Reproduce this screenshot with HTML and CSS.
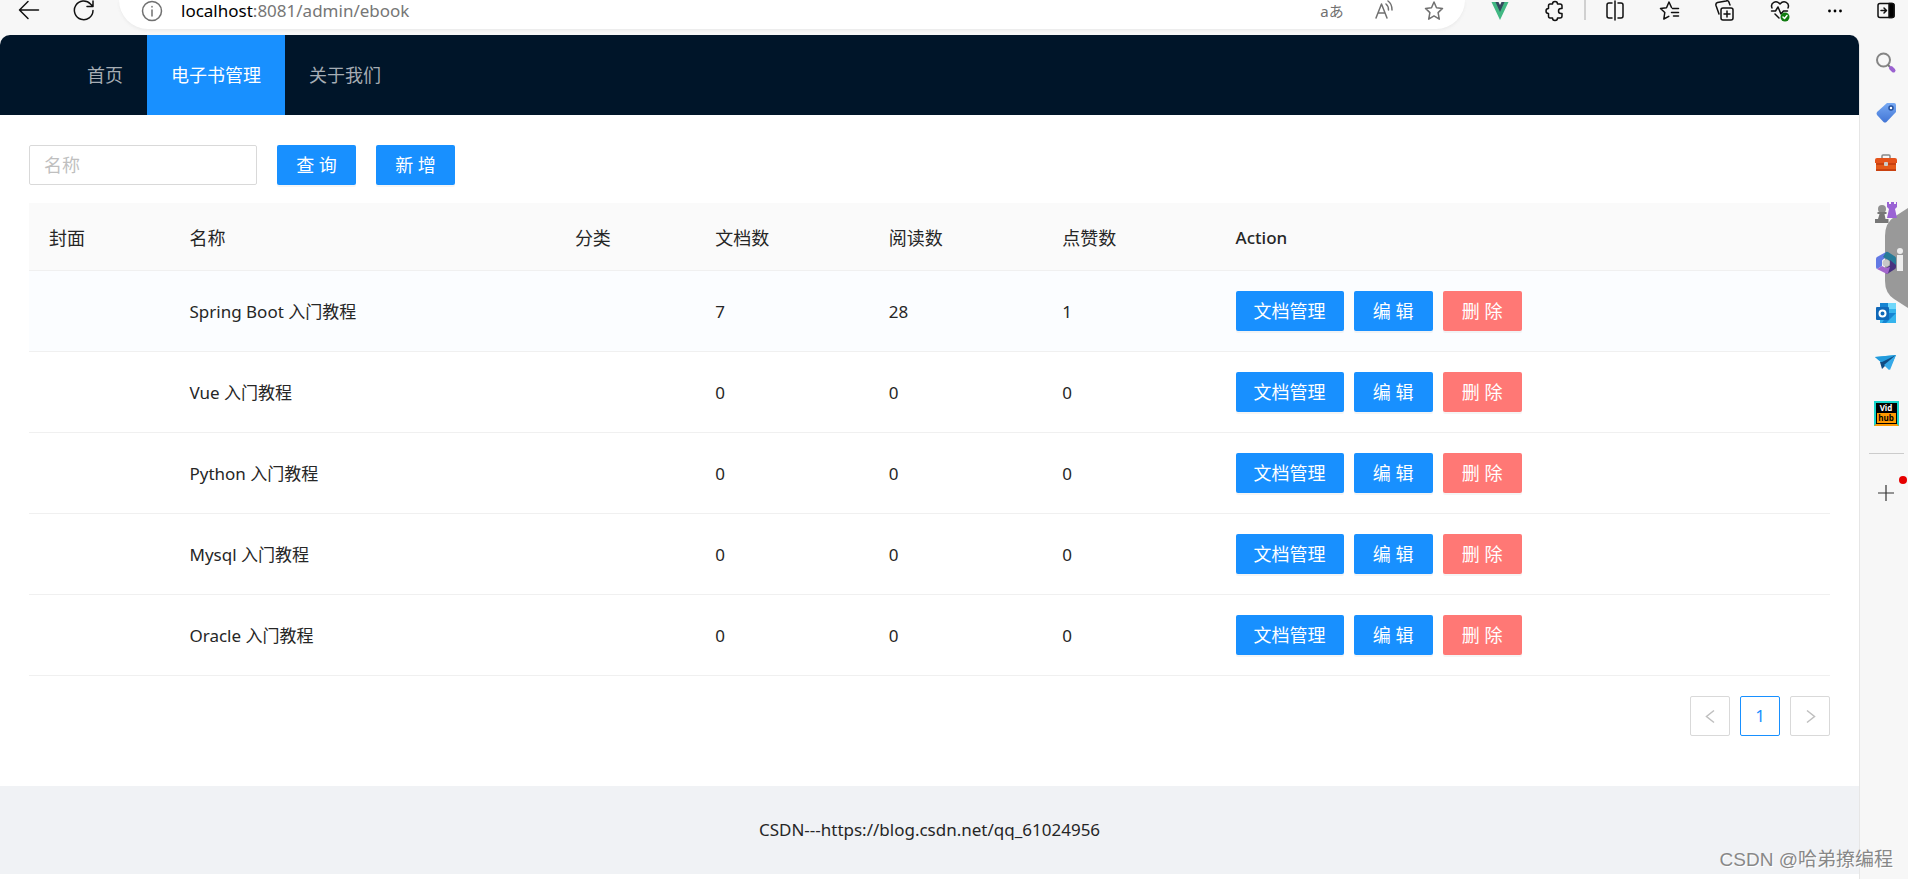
FILE: index.html
```html
<!DOCTYPE html>
<html lang="zh-CN">
<head>
<meta charset="utf-8">
<title>电子书管理</title>
<link rel="stylesheet" href="styles.css">
</head>
<body>
<div class="browser">
  <header class="toolbar">
    <div class="nav-controls">
      <button class="icon-btn" type="button" aria-label="返回"><svg width="22" height="22" viewBox="0 0 22 22" class="ink"><path d="M20.500 10H1.500M10 1.500L1.500 10l8.500 8.500"/></svg></button>
      <button class="icon-btn" type="button" aria-label="刷新"><svg width="22" height="22" viewBox="0 0 22 22" class="ink"><path d="M20 10.500a9.300 9.300 0 1 1-2.500-6.500L20 6.500M20 1v5.500h-6"/></svg></button>
    </div>
    <div class="address">
      <svg width="22" height="22" viewBox="0 0 22 22" class="soft"><circle cx="11" cy="11" r="9.500"/><path d="M11 10v6M11 6.500v.5"/></svg>
      <span class="url"><span class="host">localhost</span>:8081/admin/ebook</span>
      <div class="address-tools">
        <button class="icon-btn translate" type="button">aあ</button>
        <button class="icon-btn" type="button" aria-label="朗读"><svg width="22" height="22" viewBox="0 0 22 22" class="soft"><path d="M3 18L8.500 4 14 18M5 13h7M13 4c2 1.500 2.500 3 2.500 6M15 1c3 2 4 5 4 9"/></svg></button>
        <button class="icon-btn" type="button" aria-label="收藏"><svg width="22" height="22" viewBox="0 0 22 22" class="soft"><path d="M11 2l2.500 5.700 6 .7-4.400 4.200 1.200 6.600-5.300-3.300-5.300 3.300 1.200-6.600L2.500 8.400l6-.7z"/></svg></button>
      </div>
    </div>
    <div class="extensions">
      <button class="icon-btn" type="button" aria-label="Vue"><svg width="22" height="22" viewBox="0 0 22 22"><path fill="#41b883" d="M2.500 2h4.500L11 9l4-7h4.500L11 20z"/><path fill="#35495e" d="M6.500 2h3L11 5l1.500-3h3L11 12z"/></svg></button>
      <button class="icon-btn" type="button" aria-label="扩展"><svg width="22" height="22" viewBox="0 0 22 22" class="ink"><path d="M8.500 4a2.500 2.500 0 0 1 5 0H16q2 0 2 2v2.500h-1a2.500 2.500 0 0 0 0 5h1V16q0 2-2 2h-2.500a2.500 2.500 0 0 1-5 0H6q-1.500 0-1.500-2v-2.500a2.500 2.500 0 0 1 0-5V6q0-2 1.500-2z"/></svg></button>
      <span class="divider"></span>
      <button class="icon-btn" type="button" aria-label="分屏"><svg width="22" height="22" viewBox="0 0 22 22" class="ink"><path d="M8 3H5a2 2 0 0 0-2 2v11a2 2 0 0 0 2 2h3M14 3h3a2 2 0 0 1 2 2v11a2 2 0 0 1-2 2h-3M11 1v19"/></svg></button>
      <button class="icon-btn" type="button" aria-label="收藏夹"><svg width="22" height="22" viewBox="0 0 22 22" class="ink"><path d="M12.500 7.500L10 2 7.500 7.700l-6 .8 4.300 4-1 6.500 5-2.700"/><path d="M13.500 8.500h6M12.500 12.500h7M14.500 16h5"/></svg></button>
      <button class="icon-btn" type="button" aria-label="集锦"><svg width="22" height="22" viewBox="0 0 22 22" class="ink"><rect x="7" y="8" width="12" height="12" rx="2"/><path d="M13 11v6M10 14h6M5 14L2 5.500A2.500 2.500 0 0 1 3.500 2.500L12 1a2 2 0 0 1 3 1.500L16 5"/></svg></button>
      <button class="icon-btn" type="button" aria-label="性能"><svg width="22" height="22" viewBox="0 0 22 22" class="ink"><path d="M3 8C1 3 7-.5 11 4c4-4.500 10-1 8 4M2.500 11h4L9 7l3 7 2.500-3h4M6 14l4 4"/><circle cx="16" cy="17" r="4.500" fill="#107c10" stroke="none"/><path stroke="#fff" d="M14 17l1.500 1.500L18 15.500"/></svg></button>
      <button class="icon-btn" type="button" aria-label="更多"><svg width="22" height="22" viewBox="0 0 22 22"><circle cx="5.500" cy="11" r="1.400"/><circle cx="11" cy="11" r="1.400"/><circle cx="16.500" cy="11" r="1.400"/></svg></button>
      <button class="icon-btn toggle-side" type="button" aria-label="侧栏"><svg width="22" height="22" viewBox="0 0 22 22" class="ink"><rect x="3" y="3.500" width="16" height="14" rx="2"/><path fill="#000" d="M14 3.500h3q2 0 2 2v10q0 2-2 2h-3z"/><path d="M6 10.500h5M9 8l2.500 2.500L9 13"/></svg></button>
    </div>
  </header>

  <div class="workspace">
    <div class="page">
      <nav class="menu">
        <a class="menu-item" href="#">首页</a>
        <a class="menu-item active" href="#">电子书管理</a>
        <a class="menu-item" href="#">关于我们</a>
      </nav>
      <main class="content">
        <form class="search">
          <input class="search-input" type="text" placeholder="名称" aria-label="名称">
          <button class="btn" type="button">查 询</button>
          <button class="btn" type="button">新 增</button>
        </form>
        <table class="books">
          <colgroup><col class="c-cover"><col class="c-name"><col class="c-cover"><col class="c-count"><col class="c-count"><col class="c-count"><col></colgroup>
          <thead><tr><th>封面</th><th>名称</th><th>分类</th><th>文档数</th><th>阅读数</th><th>点赞数</th><th class="latin">Action</th></tr></thead>
          <tbody>
            <tr class="hovered"><td></td><td>Spring Boot 入门教程</td><td></td><td>7</td><td>28</td><td>1</td><td class="ops"><div class="actions"><button class="btn" type="button">文档管理</button><button class="btn" type="button">编 辑</button><button class="btn danger" type="button">删 除</button></div></td></tr>
            <tr><td></td><td>Vue 入门教程</td><td></td><td>0</td><td>0</td><td>0</td><td class="ops"><div class="actions"><button class="btn" type="button">文档管理</button><button class="btn" type="button">编 辑</button><button class="btn danger" type="button">删 除</button></div></td></tr>
            <tr><td></td><td>Python 入门教程</td><td></td><td>0</td><td>0</td><td>0</td><td class="ops"><div class="actions"><button class="btn" type="button">文档管理</button><button class="btn" type="button">编 辑</button><button class="btn danger" type="button">删 除</button></div></td></tr>
            <tr><td></td><td>Mysql 入门教程</td><td></td><td>0</td><td>0</td><td>0</td><td class="ops"><div class="actions"><button class="btn" type="button">文档管理</button><button class="btn" type="button">编 辑</button><button class="btn danger" type="button">删 除</button></div></td></tr>
            <tr><td></td><td>Oracle 入门教程</td><td></td><td>0</td><td>0</td><td>0</td><td class="ops"><div class="actions"><button class="btn" type="button">文档管理</button><button class="btn" type="button">编 辑</button><button class="btn danger" type="button">删 除</button></div></td></tr>
          </tbody>
        </table>
        <div class="pagination">
          <button class="page-btn" type="button" disabled aria-label="上一页"><svg width="16" height="16" viewBox="0 0 16 16"><path d="M12 2.500L4.500 8.500l7.500 6"/></svg></button>
          <button class="page-btn current" type="button">1</button>
          <button class="page-btn" type="button" disabled aria-label="下一页"><svg width="16" height="16" viewBox="0 0 16 16"><path d="M5 2.500l7.500 6-7.500 6"/></svg></button>
        </div>
      </main>
      <footer class="footer">CSDN---https://blog.csdn.net/qq_61024956</footer>
    </div>

    <aside class="sidebar">
      <button class="side-btn" type="button" aria-label="搜索"><svg width="24" height="24" viewBox="0 0 24 24"><circle cx="9.500" cy="9" r="6.500" fill="none" stroke="#858585" stroke-width="2"/><path d="M14 14l2 2" stroke="#777" stroke-width="2"/><path d="M17 17l2.500 2.500" stroke="#9b62d0" stroke-width="4" stroke-linecap="round"/></svg></button>
      <button class="side-btn" type="button" aria-label="购物"><svg width="24" height="24" viewBox="0 0 24 24"><defs><linearGradient id="tag" x2="0" y2="1"><stop stop-color="#77a9f3"/><stop offset="1" stop-color="#4275d5"/></linearGradient></defs><path fill="url(#tag)" d="M13 2h7q2 0 2 2v7L12.500 21q-1.500 1-3 0l-6.500-7q-1-1.500 0-3z"/><circle cx="17" cy="7" r="2" fill="#fff" stroke="#254f9b" stroke-width="1.500"/></svg></button>
      <button class="side-btn" type="button" aria-label="工具"><svg width="24" height="24" viewBox="0 0 24 24"><path d="M8 8V5q0-1 1-1h6q1 0 1 1v3" fill="none" stroke="#888" stroke-width="1.500"/><path fill="#e4531b" d="M1 9q0-2 2-2h18q2 0 2 2v3H1z"/><path fill="#c94110" d="M2 12h20v8H2z"/><path fill="#e45a1a" d="M2 14h20v4H2z"/><rect x="10" y="11" width="4" height="4" rx="1" fill="#ccc"/></svg></button>
      <button class="side-btn" type="button" aria-label="游戏"><svg width="24" height="24" viewBox="0 0 24 24"><path fill="#9a63d4" d="M13 1h2v2h2V1h3v2h2V1h1v5l-2 2 2 9H13l2-9-2-2z"/><circle cx="8" cy="8" r="4" fill="#919191"/><path fill="#777" d="M3.500 11h9v2h-2l1 5h3v4H1v-4h3l1.500-5h-2z"/></svg></button>
      <button class="side-btn" type="button" aria-label="Microsoft 365"><svg width="24" height="24" viewBox="0 0 24 24"><path fill="#6279e4" d="M12 1L3 6q-1 .5-1 2v8q0 1.500 1 2l5-3V10q0-1 1-1.500L16 4z"/><path fill="#277b98" d="M12 1q1-.5 2 0l7 4.500q1 .7 1 2V16l-6-2v-4L9 6z"/><path fill="#49337f" d="M22 14v2q0 1.500-1 2l-7 4.500q-1 .7-2 0V17l4-2.500V9z"/><path fill="#a366cc" d="M3 18l5-3 4 2 4-1-2 6.500q-1 .7-2 0z"/><circle cx="12" cy="12" r="3.500" fill="#c8c8c8"/></svg></button>
      <button class="side-btn" type="button" aria-label="Outlook"><svg width="24" height="24" viewBox="0 0 24 24"><path fill="#35b4ed" d="M6 2h16v20H6z"/><path fill="#1684d2" d="M6 2h8v8H6zM14 12h8L12 22H8z"/><path fill="#70d7fa" d="M14 2h8v6h-8z"/><rect x="2" y="6" width="13" height="13" rx="1" fill="#1068b8"/><circle cx="8.500" cy="12.500" r="3" fill="none" stroke="#fff" stroke-width="2"/></svg></button>
      <button class="side-btn" type="button" aria-label="发送"><svg width="24" height="24" viewBox="0 0 24 24"><path fill="#36b1ec" d="M1 6l21-2-7 15-6-6z"/><path fill="#239bdc" d="M1 6l21-2L8 12z"/><path fill="#104b82" d="M6 11l2 7 4-4L22 4 8 11z"/><path fill="#36a9e8" d="M22 4l-6 15-6-5z"/></svg></button>
      <button class="side-btn" type="button" aria-label="Vidhub"><span class="vidhub"><span>Vid</span><span class="hub">hub</span></span></button>
      <span class="side-divider"></span>
      <button class="side-btn add" type="button" aria-label="添加"><svg width="16" height="16" viewBox="0 0 16 16" class="plus"><path d="M8 0v16M0 8h16"/></svg><span class="dot"></span></button>
    </aside>
  </div>
  <div class="info-tab"><svg width="23" height="100" viewBox="0 0 23 100"><path fill="#999" d="M23 0L9 9Q0 15 0 28v45q0 12 9 18l14 9z"/></svg></div>
  <svg class="info-mark" width="6" height="23" viewBox="0 0 6 23"><circle cx="3" cy="3" r="3" fill="#eee"/><path fill="#eee" d="M0 7h6v16H0z"/></svg>
  <div class="watermark">CSDN @哈弟撩编程</div>
</div>
</body>
</html>
```

FILE: styles.css
```css
* { box-sizing: border-box; }
body {
  margin: 0;
  background: #f7f7f7;
  color: #262626;
  font: 17px/28px "Noto Sans", "Noto Sans CJK SC", sans-serif;
}
button, input { font: inherit; margin: 0; }
button { cursor: pointer; }
svg { display: block; flex: none; }

.browser { position: relative; display: flex; flex-direction: column; min-height: 100vh; overflow: hidden; }
.ink { fill: none; stroke: #111; stroke-width: 1.5; stroke-linecap: round; stroke-linejoin: round; }
.soft { fill: none; stroke: #707070; stroke-width: 1.5; stroke-linecap: round; stroke-linejoin: round; }
.plus { fill: none; stroke: #333; stroke-width: 1.2; }
.icon-btn { display: flex; align-items: center; justify-content: center; width: 22px; height: 22px; padding: 0; border: 0; background: none; }

/* browser toolbar */
.toolbar { display: flex; align-items: flex-start; height: 35px; padding-right: 11px; }
.nav-controls { display: flex; gap: 33px; padding-left: 18px; width: 119px; }
.address {
  display: flex; flex: 1; align-items: flex-start; height: 29px; padding: 0 20px 0 22px;
  background: #fff; border-radius: 0 0 29px 29px; box-shadow: 0 2px 3px #ececec;
}
.url { flex: 1; margin-left: 18px; color: #767676; font-size: 17px; line-height: 22px; }
.host { color: #000; }
.address-tools { display: flex; gap: 28px; }
.icon-btn.translate { width: 26px; color: #707070; font-size: 15px; line-height: 20px; white-space: nowrap; }
.extensions { display: flex; gap: 33px; padding-left: 24px; }
.divider { width: 2px; height: 20px; margin: 0 -15px; background: #d0d0d0; }
.toggle-side { margin-left: -4px; }

.workspace { display: flex; flex: 1; }
.page { display: flex; flex: 1; flex-direction: column; background: #fff; border-right: 1px solid #e6e6e6; border-radius: 10px 10px 0 0; overflow: hidden; }

/* top menu */
.menu { display: flex; padding-left: 63px; background: #001529; }
.menu-item { padding: 0 24px; color: #a6adb4; font-size: 18px; line-height: 80px; text-decoration: none; }
.menu-item.active { background: #1890ff; color: #fff; }

.content { padding: 30px 29px 50px; }
.search { display: flex; gap: 20px; }
.search-input { width: 228px; height: 40px; padding: 0 14px; border: 1px solid #d9d9d9; border-radius: 2px; font-size: 18px; }
.search-input::placeholder { color: #bfbfbf; }
.btn {
  min-width: 79px; height: 40px; padding: 0 18px; border: 0; border-radius: 2px;
  background: #1890ff; box-shadow: 0 2px 0 rgba(0, 0, 0, .04); color: #fff; font-size: 18px; white-space: nowrap;
}
.btn.danger { background: #ff7875; }

/* book table */
.books { width: 100%; margin-top: 18px; border-collapse: separate; border-spacing: 0; table-layout: fixed; }
.c-cover { width: 7.8%; }
.c-name { width: 21.4%; }
.c-count { width: 9.63%; }
.books th, .books td { padding: 21px 20px 19px; border-bottom: 1px solid #f0f0f0; text-align: left; }
.books th { padding-bottom: 18px; background: #fafafa; font-size: 18px; font-weight: 400; }
.books td.ops { padding: 20px; }
.books th.latin { font-size: 17px; font-weight: 500; }
.hovered td { background: #fbfdff; }
.actions { display: flex; gap: 10px; }

.pagination { display: flex; justify-content: flex-end; gap: 10px; margin-top: 20px; }
.page-btn { display: flex; align-items: center; justify-content: center; width: 40px; height: 40px; padding: 0; border: 1px solid #d9d9d9; border-radius: 2px; background: #fff; }
.page-btn path { fill: none; stroke: #bfbfbf; stroke-width: 1.5; }
.page-btn.current { border-color: #1890ff; color: #1890ff; }

.footer { padding: 30px; background: #f0f2f5; text-align: center; }

/* app sidebar */
.sidebar { position: relative; z-index: 1; display: flex; flex-direction: column; align-items: center; width: 48px; padding: 3px 0 0 4px; }
.side-btn { position: relative; display: flex; align-items: center; justify-content: center; width: 44px; height: 50px; padding: 0; border: 0; background: none; }
.vidhub { display: flex; flex-direction: column; width: 25px; height: 25px; border: 2px solid #16d5cb; border-bottom-color: #f90; background: #000; color: #fff; font: 700 8px/10px "Open Sans", sans-serif; text-align: center; }
.hub { margin: 0 1px; background: #f90; color: #000; }
.side-divider { width: 35px; height: 1px; margin: 15px 0 14px; background: #ccc; }
.dot { position: absolute; top: 8px; right: 1px; width: 8px; height: 8px; border-radius: 50%; background: #e60000; }

.info-tab { position: absolute; top: 208px; right: 0; }
.info-mark { position: absolute; z-index: 2; top: 248px; right: 5px; }
.watermark { position: absolute; z-index: 2; right: 15px; bottom: 5px; color: #888; font: 19px/28px "Liberation Sans", "Noto Sans CJK SC", sans-serif; text-shadow: 1px 1px 0 #fff; }
```
